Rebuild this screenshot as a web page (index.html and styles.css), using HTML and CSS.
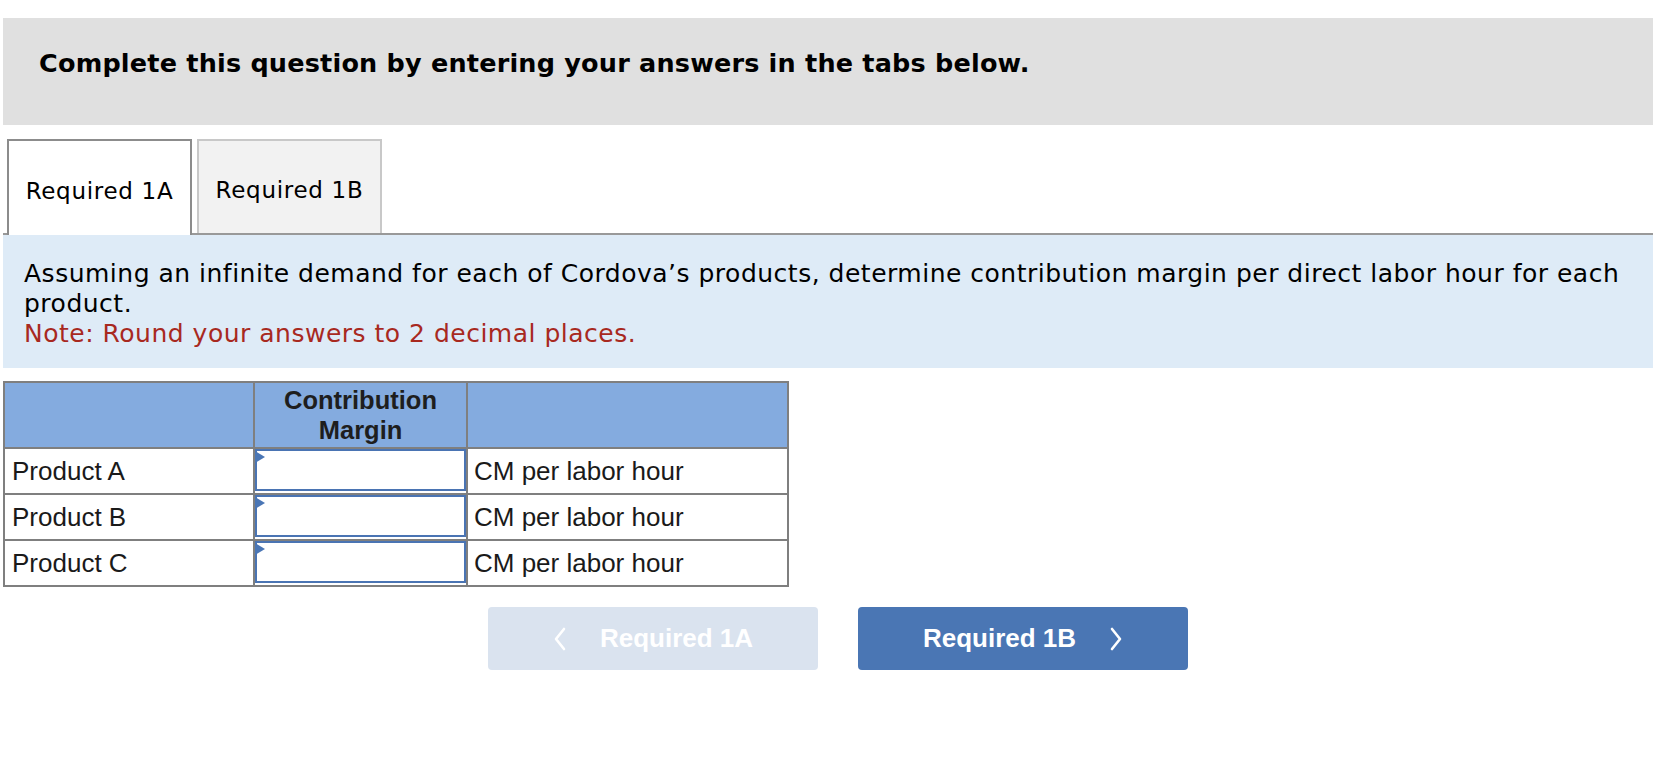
FILE: index.html
```html
<!DOCTYPE html>
<html lang="en">
<head>
<meta charset="utf-8">
<title>Required 1A</title>
<link rel="stylesheet" href="styles.css">
</head>
<body>
<div class="main">
  <div class="instructions">Complete this question by entering your answers in the tabs below.</div>
  <div class="tabs">
    <div class="tab tab-active">Required 1A</div>
    <div class="tab tab-idle">Required 1B</div>
  </div>
  <div class="prompt">
    <p class="prompt-text">Assuming an infinite demand for each of Cordova’s products, determine contribution margin per direct labor hour for each product.</p>
    <p class="prompt-note">Note: Round your answers to 2 decimal places.</p>
  </div>
  <table class="grid">
    <colgroup>
      <col class="c1">
      <col class="c2">
      <col class="c3">
    </colgroup>
    <thead>
      <tr>
        <th class="head"></th>
        <th class="head">Contribution<br>Margin</th>
        <th class="head"></th>
      </tr>
    </thead>
    <tbody>
      <tr>
        <td class="label">Product A</td>
        <td class="entry"><div class="field"><input class="box" type="text" aria-label="Product A contribution margin"></div></td>
        <td class="unit">CM per labor hour</td>
      </tr>
      <tr>
        <td class="label">Product B</td>
        <td class="entry"><div class="field"><input class="box" type="text" aria-label="Product B contribution margin"></div></td>
        <td class="unit">CM per labor hour</td>
      </tr>
      <tr>
        <td class="label">Product C</td>
        <td class="entry"><div class="field"><input class="box" type="text" aria-label="Product C contribution margin"></div></td>
        <td class="unit">CM per labor hour</td>
      </tr>
    </tbody>
  </table>
</div>
<div class="nav">
  <button class="navbtn navbtn-off" type="button">
    <svg class="chev" width="14" height="24" viewBox="0 0 14 24"><path d="M11 2 L3 12 L11 22" fill="none" stroke="#ffffff" stroke-width="2.6" stroke-linecap="round" stroke-linejoin="round"/></svg>
    <span>Required 1A</span>
  </button>
  <button class="navbtn navbtn-on" type="button">
    <span>Required 1B</span>
    <svg class="chev" width="14" height="24" viewBox="0 0 14 24"><path d="M3 2 L11 12 L3 22" fill="none" stroke="#ffffff" stroke-width="2.6" stroke-linecap="round" stroke-linejoin="round"/></svg>
  </button>
</div>
</body>
</html>
```

FILE: styles.css
```css
html, body {
  margin: 0;
  padding: 0;
  background: #ffffff;
}

body {
  width: 1676px;
  font-family: "DejaVu Sans", Verdana, sans-serif;
  color: #000000;
}

.main {
  width: 1650px;
  margin-left: 3px;
  padding-top: 18px;
}

.instructions {
  box-sizing: border-box;
  height: 107px;
  background: #e0e0e0;
  padding: 30px 0 0 36px;
  font-weight: bold;
  font-size: 25.5px;
  letter-spacing: 0.2px;
  line-height: 30px;
}

.tabs {
  display: flex;
  gap: 5px;
  margin-top: 14px;
  padding-left: 4px;
  border-bottom: 2px solid #999999;
  height: 94px;
}

.tab {
  box-sizing: border-box;
  width: 185px;
  display: flex;
  align-items: center;
  justify-content: center;
  padding-top: 6px;
  font-size: 23px;
  letter-spacing: 0.7px;
}

.tab-active {
  height: 96px;
  background: #ffffff;
  border: 2px solid #8c8c8c;
  border-bottom: none;
  position: relative;
  z-index: 1;
}

.tab-idle {
  height: 94px;
  background: #f2f2f2;
  border: 2px solid #c8c8c8;
  border-bottom: none;
}

.prompt {
  box-sizing: border-box;
  height: 133px;
  background: #deebf7;
  padding: 24px 20px 0 21px;
  font-size: 25px;
  letter-spacing: 0.5px;
  line-height: 30px;
}

.prompt p {
  margin: 0;
}

.prompt-note {
  color: #a8291f;
}

.grid {
  margin-top: 13px;
  border-collapse: collapse;
  table-layout: fixed;
  width: 784px;
  font-family: "Liberation Sans", Arial, sans-serif;
  font-size: 26px;
  color: #1a1a1a;
}

.c1 { width: 250px; }
.c2 { width: 213px; }
.c3 { width: 321px; }

.grid th,
.grid td {
  border: 2px solid #7f7f7f;
  padding: 0;
}

.grid .head {
  height: 64px;
  background: #84abdf;
  font-weight: bold;
  font-size: 25.5px;
  line-height: 30px;
  text-align: center;
  vertical-align: middle;
  color: #1e1e1e;
}

.grid .label,
.grid .unit {
  height: 44px;
  vertical-align: middle;
  padding-left: 7px;
}

.grid .unit {
  padding-left: 6px;
}

.grid .entry {
  height: 44px;
  vertical-align: top;
}

.field {
  position: relative;
}

.field::before {
  content: "";
  position: absolute;
  left: 0;
  top: 2px;
  width: 0;
  height: 0;
  border-left: 10px solid #4a76b5;
  border-top: 6px solid transparent;
  border-bottom: 6px solid transparent;
}

.box {
  display: block;
  box-sizing: border-box;
  width: 100%;
  height: 42px;
  margin: 0;
  border: 2px solid #4a74b3;
  background: #ffffff;
  outline: none;
  font-family: "Liberation Sans", Arial, sans-serif;
  font-size: 24px;
}

.nav {
  display: flex;
  justify-content: center;
  gap: 40px;
  margin-top: 20px;
}

.navbtn {
  box-sizing: border-box;
  width: 330px;
  height: 63px;
  border: none;
  border-radius: 4px;
  display: flex;
  align-items: center;
  justify-content: center;
  gap: 33px;
  padding: 0;
  font-family: "Liberation Sans", Arial, sans-serif;
  font-weight: bold;
  font-size: 26px;
  color: #ffffff;
}

.navbtn-off {
  background: #dae3ef;
}

.navbtn-on {
  background: #4a76b4;
}

.chev {
  display: block;
}
```
